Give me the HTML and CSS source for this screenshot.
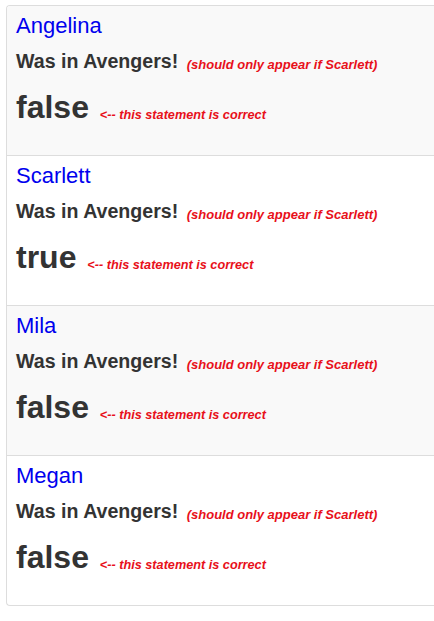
FILE: index.html
```html
<!DOCTYPE html>
<html>
<head>
<meta charset="utf-8">
<link rel="stylesheet" href="styles.css">
</head>
<body>
<div class="panel">
  <div class="row striped">
    <div class="name">Angelina</div>
    <div class="avengers">Was in Avengers! <span class="note">(should only appear if Scarlett)</span></div>
    <div class="value">false <span class="note arrow">&lt;-- this statement is correct</span></div>
  </div>
  <div class="row">
    <div class="name">Scarlett</div>
    <div class="avengers">Was in Avengers! <span class="note">(should only appear if Scarlett)</span></div>
    <div class="value">true <span class="note arrow">&lt;-- this statement is correct</span></div>
  </div>
  <div class="row striped">
    <div class="name">Mila</div>
    <div class="avengers">Was in Avengers! <span class="note">(should only appear if Scarlett)</span></div>
    <div class="value">false <span class="note arrow">&lt;-- this statement is correct</span></div>
  </div>
  <div class="row">
    <div class="name">Megan</div>
    <div class="avengers">Was in Avengers! <span class="note">(should only appear if Scarlett)</span></div>
    <div class="value">false <span class="note arrow">&lt;-- this statement is correct</span></div>
  </div>
</div>
</body>
</html>
```

FILE: styles.css
```css
html, body {
  margin: 0;
  background: #fff;
}
body {
  padding: 5px 0 0 6px;
  font-family: "Liberation Sans", Arial, sans-serif;
  color: #333;
}
.panel {
  border: 1px solid #ddd;
  border-right: none;
  border-radius: 4px 0 0 4px;
  overflow: hidden;
  background: #fff;
}
.row {
  height: 141px;
  padding: 8px 9px 0;
  border-bottom: 1px solid #ddd;
}
.row:last-child {
  border-bottom: none;
}
.striped {
  background: #f9f9f9;
}
.name {
  font-size: 22px;
  line-height: 24px;
  color: #0000ee;
}
.avengers {
  margin-top: 12px;
  font-size: 19.6px;
  line-height: 22px;
  font-weight: bold;
}
.value {
  margin-top: 17px;
  font-size: 32px;
  line-height: 36px;
  font-weight: bold;
}
.note {
  font-size: 13px;
  line-height: 1;
  font-style: italic;
  font-weight: bold;
  color: #e8101a;
  margin-left: 3px;
  position: relative;
  top: 1px;
}
.arrow {
  font-size: 12.7px;
  margin-left: 2px;
}
```
